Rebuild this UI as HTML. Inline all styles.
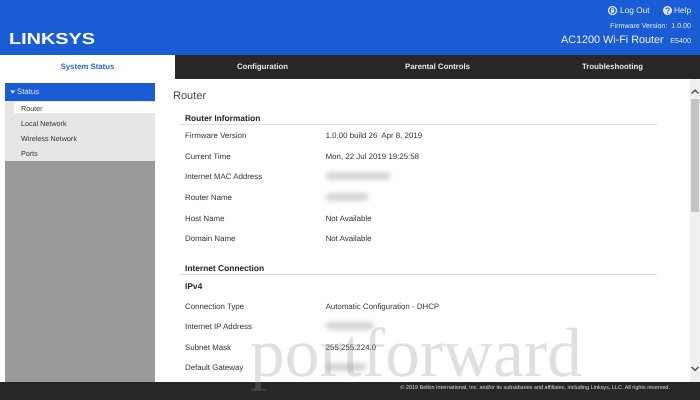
<!DOCTYPE html>
<html><head><meta charset="utf-8"><style>
html,body{margin:0;padding:0;width:700px;height:400px;overflow:hidden;background:#fff}
body{position:relative;font-family:"Liberation Sans",sans-serif;color:#333;text-rendering:geometricPrecision}
#w{position:absolute;left:0;top:0;width:700px;height:400px;filter:blur(.35px)}
.a{position:absolute;white-space:nowrap}
.b{position:absolute}
.l{left:185px;font-size:7.9px;line-height:12px}
.v{left:325.6px;font-size:7.9px;line-height:12px}
.h{left:185px;font-size:8.4px;line-height:12px;font-weight:bold;color:#222}
.t{font-size:7.8px;line-height:12px;font-weight:bold;color:#e8e8e8;text-align:center;top:60.5px}
.s{left:21px;font-size:7.2px;line-height:12px;color:#333}
.m{position:absolute;background:#d6d6d6;filter:blur(2.5px);border-radius:3px}
</style></head><body><div id="w">
<div class="b" style="left:0;top:0;width:700px;height:55px;background:#1a5cd3"></div>
<div class="a" style="left:9px;top:28.5px;font-size:16px;line-height:21px;font-weight:bold;color:#fff;transform:scaleX(1.24);transform-origin:left top">LINKSYS</div>

<svg class="b" style="left:607px;top:5px" width="80" height="11" viewBox="0 0 80 11">
<circle cx="5.5" cy="5.5" r="4" fill="none" stroke="#e4ecfa" stroke-width="1.3"/><rect x="3.8" y="4.8" width="3.4" height="2.8" fill="#e4ecfa"/><path d="M4.5 5V3.6h2V5" fill="none" stroke="#e4ecfa" stroke-width=".7"/>
<circle cx="60.5" cy="5.5" r="4.5" fill="#e4ecfa"/><path d="M58.8 4.4c.2-1.9 3.5-1.9 3.5 0 0 1.2-1.6 1.1-1.7 2.4" fill="none" stroke="#1a5cd3" stroke-width="1"/><rect x="60" y="7.4" width="1.2" height="1.2" fill="#1a5cd3"/>
</svg>
<div class="a" style="left:620px;top:4px;font-size:8.3px;line-height:12px;color:#e8effb">Log Out</div>
<div class="a" style="left:674px;top:4px;font-size:8.3px;line-height:12px;color:#e8effb">Help</div>
<div class="a" style="right:9px;top:20px;font-size:7.1px;line-height:12px;color:#e8effb">Firmware Version:&nbsp; 1.0.00</div>
<div class="a" style="left:561px;top:33px;font-size:10.8px;line-height:14px;color:#f2f5fc">AC1200 Wi-Fi Router</div>
<div class="a" style="right:9px;top:35px;font-size:7.2px;line-height:12px;color:#e8effb">E5400</div>

<div class="b" style="left:175px;top:55px;width:525px;height:24px;background:#272727"></div>
<div class="a t" style="left:0;width:175px;color:#2a62cf">System Status</div>
<div class="a t" style="left:175px;width:175px">Configuration</div>
<div class="a t" style="left:350px;width:175px">Parental Controls</div>
<div class="a t" style="left:525px;width:175px">Troubleshooting</div>

<div class="b" style="left:5px;top:83px;width:150px;height:299px;background:#999"></div>
<div class="b" style="left:5px;top:83px;width:150px;height:78px;background:#e6e6e6"></div>
<div class="b" style="left:5px;top:83px;width:150px;height:18px;background:#1a5cd3"></div>
<div class="b" style="left:14px;top:102px;width:141px;height:11px;background:#fff"></div>
<svg class="b" style="left:10px;top:90px" width="6" height="5"><path d="M0 .5h5.4L2.7 3.6z" fill="#e6edfa"/></svg>
<div class="a" style="left:17px;top:86px;font-size:7.8px;line-height:12px;color:#dfe8f9">Status</div>
<div class="a s" style="top:103px">Router</div>
<div class="a s" style="top:118px">Local Network</div>
<div class="a s" style="top:133px">Wireless Network</div>
<div class="a s" style="top:148px">Ports</div>

<div class="a" style="left:173px;top:89px;font-size:11px;line-height:15px;color:#444">Router</div>
<div class="a h" style="top:112px">Router Information</div>
<div class="b" style="left:179px;top:124px;width:478px;height:1px;background:#e2e2e2"></div>
<div class="a l" style="top:130px">Firmware Version</div><div class="a v" style="top:130px">1.0.00 build 26&nbsp; Apr 8, 2019</div>
<div class="a l" style="top:151px">Current Time</div><div class="a v" style="top:151px">Mon, 22 Jul 2019 19:25:58</div>
<div class="a l" style="top:171px">Internet MAC Address</div><div class="m" style="left:326px;top:172px;width:64px;height:8px"></div>
<div class="a l" style="top:192px">Router Name</div><div class="m" style="left:326px;top:193px;width:42px;height:8px"></div>
<div class="a l" style="top:213px">Host Name</div><div class="a v" style="top:213px">Not Available</div>
<div class="a l" style="top:233px">Domain Name</div><div class="a v" style="top:233px">Not Available</div>
<div class="a h" style="top:262px">Internet Connection</div>
<div class="b" style="left:179px;top:274px;width:478px;height:1px;background:#e2e2e2"></div>
<div class="a h" style="top:280px">IPv4</div>
<div class="a l" style="top:301px">Connection Type</div><div class="a v" style="top:301px">Automatic Configuration - DHCP</div>
<div class="a l" style="top:321px">Internet IP Address</div><div class="m" style="left:326px;top:322px;width:48px;height:8px"></div>
<div class="a l" style="top:342px">Subnet Mask</div><div class="a v" style="top:342px">255.255.224.0</div>
<div class="a l" style="top:362px">Default Gateway</div><div class="m" style="left:326px;top:363px;width:40px;height:8px"></div>

<div class="b" style="left:690px;top:79px;width:10px;height:303px;background:#f0f0f0"></div>
<div class="b" style="left:691px;top:99px;width:8px;height:113px;background:#c4c4c4"></div>
<svg class="b" style="left:690px;top:88px" width="10" height="8"><path d="M1.5 5.5L5 2.2l3.5 3.3" fill="none" stroke="#505050" stroke-width="1.5"/></svg>
<svg class="b" style="left:690px;top:365px" width="10" height="8"><path d="M1.5 2L5 5.3 8.5 2" fill="none" stroke="#505050" stroke-width="1.5"/></svg>

<div class="b" style="left:0;top:382px;width:700px;height:18px;background:#272727"></div>
<div class="a" style="right:30px;top:382.5px;font-size:5.48px;line-height:11px;color:#ddd">© 2019 Belkin International, Inc. and/or its subsidiaries and affiliates, including Linksys, LLC. All rights reserved.</div>

<div class="a" style="left:250px;top:316px;font-family:'Liberation Serif',serif;font-size:69.5px;line-height:76px;color:rgba(140,140,140,.27)">portforward</div>
</div></body></html>
